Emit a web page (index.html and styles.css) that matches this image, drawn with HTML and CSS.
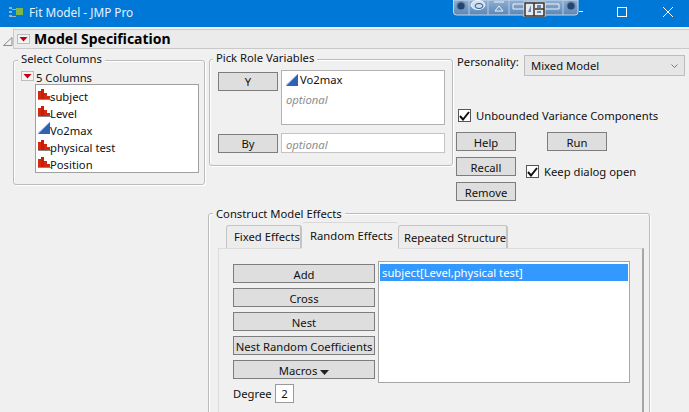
FILE: index.html
```html
<!DOCTYPE html>
<html lang="en">
<head>
<meta charset="utf-8">
<title>Fit Model - JMP Pro</title>
<link rel="stylesheet" href="styles.css">
</head>
<body>
<svg class="defs" width="0" height="0">
  <defs>
    <symbol id="nom" viewBox="0 0 13 12">
      <rect x="0" y="11" width="13" height="1" fill="#8a8a8a"/>
      <rect x="0" y="3" width="4" height="8" fill="#d22a10"/>
      <rect x="3" y="1" width="3" height="10" fill="#c81e0a"/>
      <rect x="6" y="5" width="3" height="6" fill="#d22a10"/>
      <rect x="9" y="8" width="3" height="3" fill="#d22a10"/>
    </symbol>
    <symbol id="con" viewBox="0 0 13 12">
      <path d="M0 12 L12 0 V12 Z" fill="#2f62b0"/>
      <path d="M0 11.5 L12 0" stroke="#7f9ccc" stroke-width="1" fill="none"/>
    </symbol>
    <symbol id="tri" viewBox="0 0 13 10">
      <rect x=".5" y=".5" width="12" height="9" fill="#f3f3f3" stroke="#bdbdbd"/>
      <path d="M2.5 3 H10.5 L6.5 7.5 Z" fill="#c00010"/>
    </symbol>
  </defs>
</svg>
<header class="titlebar">
  <svg class="appicon" width="14" height="12" viewBox="0 0 14 12">
    <rect x="7" y="2" width="7" height="7" fill="#7cb84a"/>
    <rect x="0" y="1" width="3" height="2" fill="#9fb2c4"/>
    <rect x="0" y="5" width="3" height="2" fill="#9fb2c4"/>
    <rect x="0" y="9" width="3" height="2" fill="#9fb2c4"/>
    <rect x="3" y="3" width="4" height="1" fill="#9fb2c4"/>
    <rect x="3" y="10" width="4" height="1" fill="#9fb2c4"/>
  </svg>
  <span class="title">Fit Model - JMP Pro</span>
  <div class="winbtns">
    <svg width="10" height="10" viewBox="0 0 10 10"><rect x=".5" y=".5" width="9" height="9" fill="none" stroke="#fff"/></svg>
    <svg width="10" height="10" viewBox="0 0 10 10"><path d="M0 0 L10 10 M10 0 L0 10" stroke="#fff" fill="none"/></svg>
  </div>
</header>
<svg class="floatbar" width="131" height="17" viewBox="0 0 131 17">
  <defs>
    <linearGradient id="g" x1="0" y1="0" x2="0" y2="1"><stop offset="0" stop-color="#8fb0d3"/><stop offset="1" stop-color="#5a87b8"/></linearGradient>
  </defs>
  <path d="M.5 0 V12 Q.5 15 3.5 15 H122 Q125 15 125 12 V0 Z" fill="url(#g)" stroke="#c8d8ea"/>
  <path d="M126 11.5 H130" stroke="#fff"/>
  <path d="M16 0 V15 M35 0 V15 M56 0 V15 M110 0 V15" stroke="#b6cde4"/>
  <circle cx="8" cy="6" r="5" fill="#6f8fb3"/>
  <circle cx="8" cy="6" r="3.6" fill="#234670"/>
  <circle cx="118" cy="6" r="5" fill="#6f8fb3"/>
  <circle cx="118" cy="6" r="3.6" fill="#234670"/>
  <ellipse cx="25" cy="5" rx="7" ry="4.5" fill="#cfdeee" stroke="#f0f5fa"/>
  <ellipse cx="26" cy="6" rx="4" ry="2.5" fill="none" stroke="#31598a"/>
  <path d="M41 2 H51 M42 11 L46 6 L50 11 Z" fill="none" stroke="#eef3f9"/>
  <path d="M60 4 H71 V9 H60 Z M92 4 H106 V9 H92 Z" fill="none" stroke="#eef3f9"/>
  <rect x="71" y="2" width="21" height="15" fill="#e9e9e9" stroke="#d8d8d8"/>
  <path d="M72 3 H91 V16 H72 Z M81 3 V16 M82 9 H91" fill="none" stroke="#333" stroke-width="1.5"/>
  <path d="M75 12 L78 5 V12 Z M84 5 H88 V8 H84 Z M84 11 H88 V13 H84 Z" fill="#5f8cbd"/>
</svg>
<main class="content">
  <div class="outline">
    <svg class="disclose" width="10" height="9" viewBox="0 0 10 9"><path d="M9 .5 V8.5 H.5 Z" fill="none" stroke="#8a8a8a"/></svg>
    <div class="outline-head">
      <svg class="redbtn" width="13" height="10"><use href="#tri"/></svg>
      <h1>Model Specification</h1>
    </div>
  </div>

  <div class="top">
    <section class="group g-select">
      <h2 class="legend">Select Columns</h2>
      <div class="count"><svg class="redbtn" width="13" height="10"><use href="#tri"/></svg><span>5 Columns</span></div>
      <ul class="list columns">
        <li><svg width="13" height="12"><use href="#nom"/></svg>subject</li>
        <li><svg width="13" height="12"><use href="#nom"/></svg>Level</li>
        <li><svg width="13" height="12"><use href="#con"/></svg>Vo2max</li>
        <li><svg width="13" height="12"><use href="#nom"/></svg>physical test</li>
        <li><svg width="13" height="12"><use href="#nom"/></svg>Position</li>
      </ul>
    </section>

    <section class="group g-role">
      <h2 class="legend">Pick Role Variables</h2>
      <div class="role-row">
        <button class="btn role-btn">Y</button>
        <div class="list role-list">
          <div class="role-item"><svg width="13" height="12"><use href="#con"/></svg>Vo2max</div>
          <div class="optional">optional</div>
        </div>
      </div>
      <div class="role-row by">
        <button class="btn role-btn">By</button>
        <div class="list by-list"><div class="optional">optional</div></div>
      </div>
    </section>

    <section class="side">
      <div class="person">
        <span class="person-label">Personality:</span>
        <div class="select"><span>Mixed Model</span>
          <svg width="7" height="4" viewBox="0 0 7 4"><path d="M.5 .5 L3.5 3.5 L6.5 .5" fill="none" stroke="#777"/></svg>
        </div>
      </div>
      <label class="check unbounded"><span class="box"><svg width="11" height="10" viewBox="0 0 11 10"><path d="M1 5 L4 8.5 L10 1" fill="none" stroke="#111" stroke-width="2"/></svg></span>Unbounded Variance Components</label>
      <div class="actions">
        <button class="btn">Help</button>
        <button class="btn run">Run</button>
        <button class="btn">Recall</button>
        <label class="check keep"><span class="box"><svg width="11" height="10" viewBox="0 0 11 10"><path d="M1 5 L4 8.5 L10 1" fill="none" stroke="#111" stroke-width="2"/></svg></span>Keep dialog open</label>
        <button class="btn">Remove</button>
      </div>
    </section>
  </div>

  <section class="group g-construct">
    <h2 class="legend">Construct Model Effects</h2>
    <div class="tabs">
      <div class="tab">Fixed Effects</div>
      <div class="tab active">Random Effects</div>
      <div class="tab last">Repeated Structure</div>
    </div>
    <div class="panel">
      <div class="effects-btns">
        <button class="btn">Add</button>
        <button class="btn">Cross</button>
        <button class="btn">Nest</button>
        <button class="btn">Nest Random Coefficients</button>
        <button class="btn">Macros <svg width="9" height="5" viewBox="0 0 9 5"><path d="M0 0 H9 L4.5 5 Z" fill="#222"/></svg></button>
        <div class="degree"><span class="deg-label">Degree</span><span class="deg-input">2</span></div>
      </div>
      <div class="list effects"><div class="selected">subject[Level,physical test]</div></div>
    </div>
  </section>
</main>
</body>
</html>
```
FILE: styles.css
```css
* { box-sizing: border-box; }
html, body { margin: 0; height: 100%; }
html { overflow: hidden; }
body {
  width: 689px; height: 412px; overflow: hidden;
  background: #f0f0f0; color: #111;
  font: 11.25px/16px "Noto Sans", "Open Sans", sans-serif;
  position: relative;
}
.defs { position: absolute; }
ul { list-style: none; margin: 0; padding: 0; }

.titlebar {
  height: 27px; background: #0078d7; color: #e6f1fb;
  display: flex; align-items: center; padding: 0 0 4px 9px;
}
.appicon { margin-right: 6px; }
.title { font-size: 11.8px; }
.winbtns { margin-left: auto; display: flex; gap: 36px; padding-right: 16px; }
.floatbar { position: absolute; left: 453px; top: 0; }

.content { height: 385px; overflow: hidden; }
.outline { display: flex; align-items: center; height: 20px; margin-top: 2px; }
.content::before { content: ""; display: block; height: 2px; margin-bottom: -2px; }
.disclose { margin: 4px 0 0 3px; flex: none; }
.outline-head {
  flex: 1; height: 20px; display: flex; align-items: center; gap: 4px;
  background: #ebebeb; border: solid #c9c9c9; border-width: 1px 0 1px 1px; padding-left: 3px;
}
.redbtn { display: block; flex: none; }
h1 { font-size: 14px; line-height: 18px; font-weight: 700; margin: 0; color: #000; }

.top { display: flex; padding-left: 13px; margin-top: 10px; align-items: flex-start; }
.group {
  position: relative; border: 1px solid #bcbcbc; border-radius: 3px;
  box-shadow: 1px 1px 0 #fff, inset 1px 1px 0 #fff;
}
.legend {
  position: absolute; left: 4px; top: -10px; margin: 0; padding: 0 3px;
  font-size: inherit; font-weight: 400; line-height: 16px; background: #f0f0f0; color: #111;
}

.g-select { width: 192px; height: 125px; margin-top: 1px; padding: 10px 5px 0 7px; }
.count { display: flex; align-items: center; gap: 2px; height: 10px; margin-bottom: 3px; }
.count span { line-height: 14px; position: relative; top: 2px; }
.list { background: #fff; border: 1px solid #a6a6a6; }
.columns { width: 164px; height: 89px; margin-left: 14px; padding: 3px 0 0 2px; border-color: #a0a0a0; }
.columns li { display: flex; align-items: flex-start; height: 17px; line-height: 17px; }
.columns svg { margin-right: -1px; flex: none; }

.g-role { width: 244px; height: 107px; margin-left: 4px; padding: 10px 7px 0 8px; }
.g-role .legend { left: 3px; }
.role-row { display: flex; gap: 3px; align-items: flex-start; }
.btn {
  font: inherit; color: #111; background: #dedede; border: 1px solid #7d7d7d;
  padding: 2px 0 0; height: 19px; line-height: 15px; display: block; white-space: nowrap;
}
.role-btn { width: 60px; margin-top: 2px; flex: none; padding-top: 0; line-height: 16px; }
.role-list { width: 164px; height: 55px; padding: 3px 4px; border-color: #b2b2b2; }
.role-item { display: flex; align-items: center; height: 12px; margin-bottom: 5px; }
.role-item svg { margin-right: 1px; }
.optional { font-style: italic; color: #8d8d8d; line-height: 17px; }
.by { margin-top: 8px; }
.by .role-btn { margin-top: 1px; }
.by-list { width: 164px; height: 20px; padding: 2px 4px; border-color: #c4c4c4; }

.side { margin-left: 3px; width: 232px; margin-top: -4px; }
.person { display: flex; height: 21px; }
.person-label { width: 67px; margin-left: 1px; line-height: 14px; }
.select {
  width: 161px; height: 21px; background: #e6e6e6; border: 1px solid #bdbdbd;
  display: flex; align-items: center; justify-content: space-between; padding: 1px 6px 0;
}
.check { display: flex; align-items: center; gap: 5px; height: 13px; }
.box { width: 13px; height: 13px; background: #fff; border: 1px solid #555; display: flex; align-items: center; justify-content: center; flex: none; }
.unbounded { margin: 33px 0 0 2px; }
.actions {
  display: grid; grid-template-columns: 60px 1fr; grid-template-rows: 19px 19px 19px;
  row-gap: 6px; margin-top: 10px;
}
.run { width: 60px; margin-left: 31px; }
.keep { margin: 8px 0 0 10px; }

.g-construct { width: 442px; height: 230px; margin: 12px 0 0 208px; padding: 8px 6px 0 9px; }
.g-construct .legend { top: -8px; }
.tabs { display: flex; align-items: flex-end; height: 26px; padding-left: 8px; position: relative; z-index: 1; }
.tab {
  height: 23px; padding: 3px 0 0 7px; width: 76px; background: #ececec;
  border: solid #c4c4c4; border-width: 1px 2px 0 1px; border-radius: 3px 3px 0 0; white-space: nowrap; overflow: hidden;
}
.tab.active { height: 32px; width: 96px; margin-bottom: -6px; background: #f0f0f0; border: 0; padding: 5px 0 0 8px; border-top: 1px solid #d8d8d8; }
.tab.last { width: 110px; padding: 4px 0 0 5px; }
.panel {
  height: 170px; width: 426px; display: flex; align-items: flex-start; gap: 3px;
  border: solid #dcdcdc; border-width: 1px 2px 0 1px; border-right-color: #a6a6a6; padding: 12px 0 0 14px;
}
.effects-btns { width: 142px; display: flex; flex-direction: column; gap: 5px; margin-top: 3px; flex: none; }
.effects-btns .btn { width: 142px; }
.degree { display: flex; align-items: center; height: 19px; }
.deg-label { width: 42px; flex: none; }
.deg-input { width: 19px; height: 19px; background: #fff; border: 1px solid #9a9a9a; text-align: center; line-height: 17px; }
.effects { width: 252px; height: 122px; padding: 2px 1px 0 1px; }
.selected { height: 17px; background: #3399ff; color: #fff; padding-left: 2px; line-height: 17px; }
```
